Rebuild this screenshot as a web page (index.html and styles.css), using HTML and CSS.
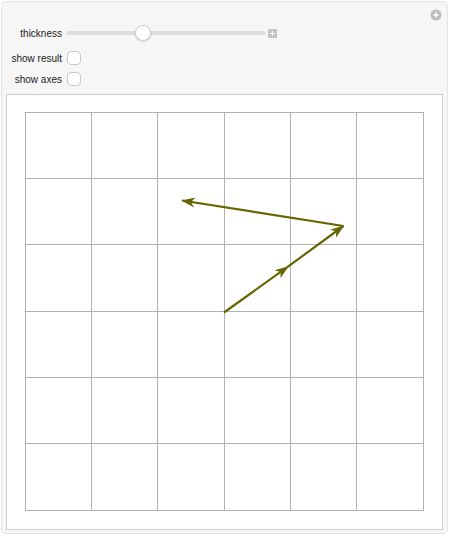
FILE: index.html
```html
<!DOCTYPE html>
<html>
<head>
<meta charset="utf-8">
<link rel="stylesheet" href="styles.css">
</head>
<body>
<div class="panel">
  <svg class="corner-plus" width="12" height="12" viewBox="0 0 12 12">
    <circle cx="6" cy="6" r="5.5" fill="#bcbcbc"/>
    <path d="M6 3.2V8.8M3.2 6H8.8" stroke="#fff" stroke-width="1.6"/>
  </svg>
  <div class="controls">
    <div class="row row-slider">
      <span class="label">thickness</span>
      <div class="slider">
        <div class="track"></div>
        <div class="thumb" style="left:69px"></div>
      </div>
      <span class="step-plus"></span>
    </div>
    <div class="row row-check1">
      <span class="label">show result</span>
      <span class="checkbox"></span>
    </div>
    <div class="row row-check2">
      <span class="label">show axes</span>
      <span class="checkbox"></span>
    </div>
  </div>
  <div class="frame">
    <svg class="plot" width="435" height="434" viewBox="7 95 435 434">
      <defs>
        <marker id="head" viewBox="-14 -7 15 14" refX="0" refY="0" markerWidth="15" markerHeight="14" markerUnits="userSpaceOnUse" orient="auto">
          <path d="M0.8,0 L-13,-5 L-9,0 L-13,5 Z" fill="#666600"/>
        </marker>
      </defs>
      <g stroke="#b2b2b2" stroke-width="1" fill="none">
        <rect x="25.5" y="112.5" width="398" height="398"/>
        <line x1="91.5" y1="112.5" x2="91.5" y2="510.5"/>
        <line x1="157.5" y1="112.5" x2="157.5" y2="510.5"/>
        <line x1="224.5" y1="112.5" x2="224.5" y2="510.5"/>
        <line x1="290.5" y1="112.5" x2="290.5" y2="510.5"/>
        <line x1="356.5" y1="112.5" x2="356.5" y2="510.5"/>
        <line x1="25.5" y1="178.5" x2="423.5" y2="178.5"/>
        <line x1="25.5" y1="244.5" x2="423.5" y2="244.5"/>
        <line x1="25.5" y1="311.5" x2="423.5" y2="311.5"/>
        <line x1="25.5" y1="377.5" x2="423.5" y2="377.5"/>
        <line x1="25.5" y1="443.5" x2="423.5" y2="443.5"/>
      </g>
      <g stroke="#666600" stroke-width="2.2" fill="none">
        <path d="M224,312.5 L288,266.6 L343.5,226" marker-mid="url(#head)" marker-end="url(#head)"/>
        <path d="M343.5,226 L182,200.5" marker-end="url(#head)"/>
      </g>
    </svg>
  </div>
</div>
</body>
</html>
```
FILE: styles.css
```css
html, body {
  margin: 0;
  padding: 0;
  background: #ffffff;
}
body {
  font-family: "Liberation Sans", Arial, Helvetica, sans-serif;
  font-size: 10px;
  color: #222;
}
.panel {
  position: relative;
  margin: 1px;
  width: 447px;
  height: 533px;
  box-sizing: border-box;
  background: #f6f6f6;
  border: 1px solid #e3e3e3;
  border-radius: 5px;
}
.corner-plus {
  position: absolute;
  top: 7px;
  right: 5px;
}
.controls {
  display: flex;
  flex-direction: column;
  padding-top: 23px;
}
.row {
  display: flex;
  align-items: center;
  height: 16px;
}
.row-check1 { margin-top: 9px; }
.row-check2 { margin-top: 5px; }
.label {
  width: 60px;
  text-align: right;
  white-space: nowrap;
  line-height: 16px;
  padding-top: 1px;
}
.slider {
  position: relative;
  width: 200px;
  height: 16px;
  margin-left: 4px;
  display: flex;
  align-items: center;
}
.track {
  width: 100%;
  height: 4px;
  border-radius: 2px;
  background: #dcdcdc;
}
.thumb {
  position: absolute;
  top: 0;
  width: 16px;
  height: 16px;
  box-sizing: border-box;
  border-radius: 50%;
  background: #fff;
  border: 1px solid #d2d2d2;
  box-shadow: 0 0.5px 1.5px rgba(0,0,0,0.2);
}
.step-plus {
  position: relative;
  width: 9px;
  height: 9px;
  margin-left: 2px;
  background: #c4c4c4;
}
.step-plus::before, .step-plus::after {
  content: "";
  position: absolute;
  background: #fff;
}
.step-plus::before { left: 4px; top: 2px; width: 1px; height: 5px; }
.step-plus::after { left: 2px; top: 4px; width: 5px; height: 1px; }
.checkbox {
  width: 14px;
  height: 14px;
  margin-left: 5px;
  box-sizing: border-box;
  border: 1px solid #c9c9c9;
  border-radius: 4px;
  background: #fff;
}
.frame {
  margin-top: 7px;
  margin-left: 4px;
  width: 437px;
  height: 436px;
  box-sizing: border-box;
  border: 1px solid #cfcfcf;
  background: #fff;
}
.plot {
  display: block;
}
```
